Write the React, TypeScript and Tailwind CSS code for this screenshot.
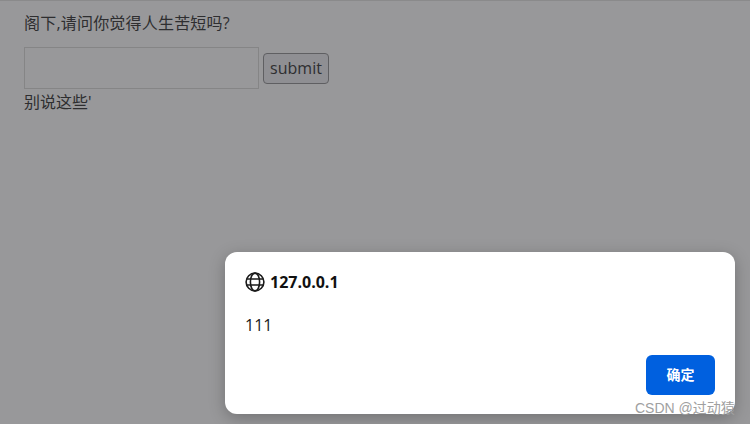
import React from 'react';

const font = { fontFamily: '"Open Sans", "Noto Sans CJK SC", sans-serif' };

const GlobeIcon: React.FC = () => (
  <svg width="20" height="20" viewBox="0 0 20 20" fill="none" stroke="#1a1a1a" strokeWidth="1.6">
    <circle cx="10" cy="10" r="8.9" />
    <ellipse cx="10" cy="10" rx="4.6" ry="8.9" />
    <path d="M1.8 7h16.4M1.8 13h16.4" />
  </svg>
);

const App: React.FC = () => {
  return (
    <div className="relative w-[750px] h-[424px] overflow-hidden bg-[#98989a] border-t border-[#8a8a8b] text-[#2e2e30] text-base" style={font}>
      <div className="pl-6 pt-[11px]">
        <p className="leading-[22px] tracking-[0.2px]">阁下,请问你觉得人生苦短吗?</p>
        <div className="flex items-center gap-1 mt-[13px]">
          <input className="w-[235px] h-[42px] border border-[#858586] bg-transparent" />
          <button className="w-[66px] h-[31px] rounded-[4px] border border-[#5f5f62] bg-[#8f8f93] leading-none text-[#2e2e30]">submit</button>
        </div>
        <p className="leading-[22px] mt-[2px]">别说这些'</p>
      </div>

      {/* alert dialog */}
      <div className="absolute left-[225px] top-[251px] w-[510px] h-[162px] rounded-xl bg-white shadow-[0_4px_16px_rgba(0,0,0,0.25)] px-5 pt-5 pb-[19px] flex flex-col text-[#1a1a1a]">
        <div className="flex items-center gap-[5px] h-5">
          <GlobeIcon />
          <span className="text-base font-bold text-[#111]">127.0.0.1</span>
        </div>
        <p className="mt-[23px] text-base leading-5">111</p>
        <div className="flex justify-end mt-auto">
          <button className="w-[69px] h-10 rounded-md bg-[#0060df] text-white text-sm font-bold">确定</button>
        </div>
      </div>

      <span className="absolute left-[635px] top-[397px] text-[14px] leading-5 text-[#a0a0a0]" style={{ fontFamily: '"Liberation Sans", "Noto Sans CJK SC", sans-serif' }}>CSDN @过动猿</span>
    </div>
  );
};

export default App;
